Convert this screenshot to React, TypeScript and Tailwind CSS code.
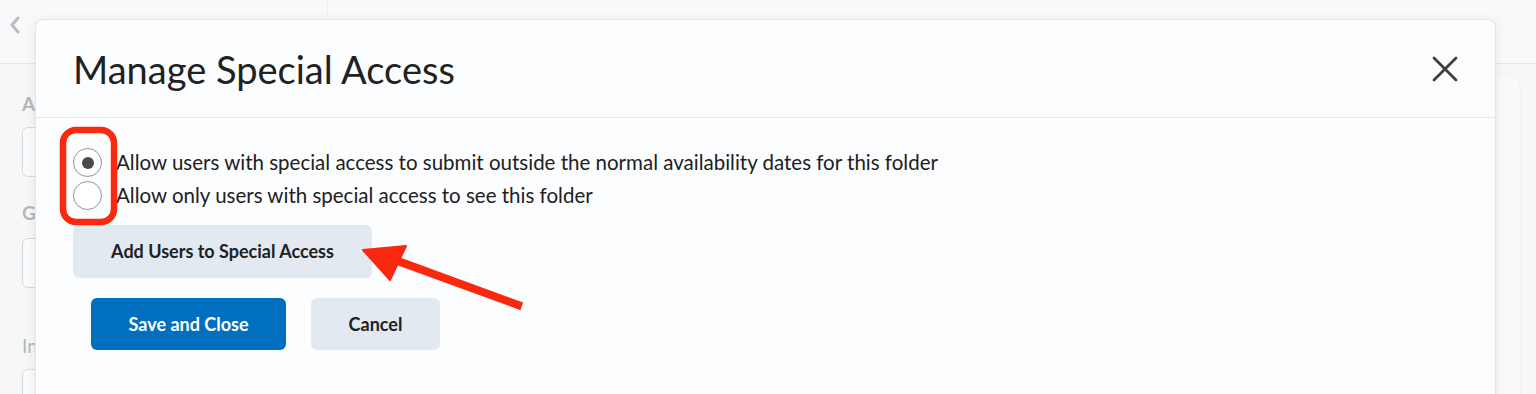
import { useState } from "react";

const font = { fontFamily: "Lato, 'Noto Sans', sans-serif" };

function Radio({ checked, onClick }: { checked: boolean; onClick: () => void }) {
  return (
    <button
      onClick={onClick}
      className="w-[29px] h-[29px] shrink-0 rounded-full border-[1.5px] border-[#8f9396] bg-white flex items-center justify-center"
    >
      {checked && <span className="w-[12px] h-[12px] rounded-full bg-[#494c4e]" />}
    </button>
  );
}

export default function App() {
  const [choice, setChoice] = useState(0);
  const options = [
    "Allow users with special access to submit outside the normal availability dates for this folder",
    "Allow only users with special access to see this folder",
  ];

  return (
    <div className="relative w-[1536px] h-[394px] overflow-hidden bg-[#f6f7f9]" style={font}>
      {/* page behind the dialog */}
      <div className="h-[64px] bg-[#f8f9fb] border-b border-[#e4e6e9] flex">
        <div className="w-[328px] border-r border-[#eceef0] pl-[8px] pt-[14px] text-[#b9bcbf]">
          <svg width="14" height="22" viewBox="0 0 14 22" fill="none">
            <path d="M10 4 L4 11 L10 18" stroke="currentColor" strokeWidth="3" strokeLinecap="round" strokeLinejoin="round" />
          </svg>
        </div>
      </div>
      <div className="pl-[22px] pt-[28px] flex flex-col text-[#b4b7ba] font-bold text-[19px]">
        <div className="h-[24px] leading-[24px]">A</div>
        <div className="mt-[11px] h-[50px] w-[200px] rounded-[6px] border border-[#d6d9dc] bg-[#fafbfc]" />
        <div className="mt-[24px] h-[24px] leading-[24px]">G</div>
        <div className="mt-[13px] h-[50px] w-[200px] rounded-[6px] border border-[#d6d9dc] bg-[#fafbfc]" />
        <div className="mt-[46px] h-[24px] leading-[24px] font-normal">In</div>
        <div className="mt-[11px] h-[50px] w-[200px] rounded-[6px] border border-[#d6d9dc] bg-[#fafbfc]" />
      </div>
      <div className="absolute left-[1497px] top-[78px] w-[24px] h-[330px] rounded-tr-[10px] bg-[#f9fafb] border-r border-[#eef0f2]" />

      {/* dialog */}
      <div className="absolute left-[35px] top-[19px] w-[1461px] h-[400px] rounded-[8px] bg-[#fcfdfe] border border-[#e3e5e8] shadow-[0_2px_12px_rgba(0,0,0,0.08)]">
        <div className="h-[98px] border-b border-[#e6e8eb] flex items-center justify-between pl-[37px] pr-[37px]">
          <h1 className="text-[38px] text-[#202122] leading-none">Manage Special Access</h1>
          <button className="text-[#3d3f41]">
            <svg width="26" height="26" viewBox="0 0 26 26">
              <path d="M2 2 L24 24 M24 2 L2 24" stroke="currentColor" strokeWidth="2.8" strokeLinecap="round" />
            </svg>
          </button>
        </div>
        <div className="pl-[37px] pt-[30px] flex flex-col">
          <div className="flex flex-col gap-[4px]">
            {options.map((o, i) => (
              <label key={i} className="flex items-center gap-[14px] text-[20.5px] text-[#202122] leading-[29px]">
                <Radio checked={choice === i} onClick={() => setChoice(i)} />
                <span>{o}</span>
              </label>
            ))}
          </div>
          <button className="mt-[15px] w-[299px] h-[53px] rounded-[6px] bg-[#e3e9f1] text-[#202122] font-bold text-[18px]">
            Add Users to Special Access
          </button>
          <div className="mt-[20px] ml-[18px] flex gap-[25px]">
            <button className="w-[195px] h-[52px] rounded-[6px] bg-[#006fbf] text-white font-bold text-[18px]">
              Save and Close
            </button>
            <button className="w-[129px] h-[52px] rounded-[6px] bg-[#e3e9f1] text-[#202122] font-bold text-[18px]">
              Cancel
            </button>
          </div>
        </div>
      </div>

      {/* annotation overlay */}
      <svg className="absolute inset-0 pointer-events-none" width="1536" height="394">
        <rect x="63" y="130" width="51" height="92" rx="13" fill="none" stroke="#f8290f" strokeWidth="6.5" />
        <path d="M518 305 L395 260" stroke="#f8290f" strokeWidth="8" strokeLinecap="square" />
        <path d="M363 250 L406 246 L390 280 Z" fill="#f8290f" stroke="#f8290f" strokeWidth="2" strokeLinejoin="round" />
      </svg>
    </div>
  );
}
